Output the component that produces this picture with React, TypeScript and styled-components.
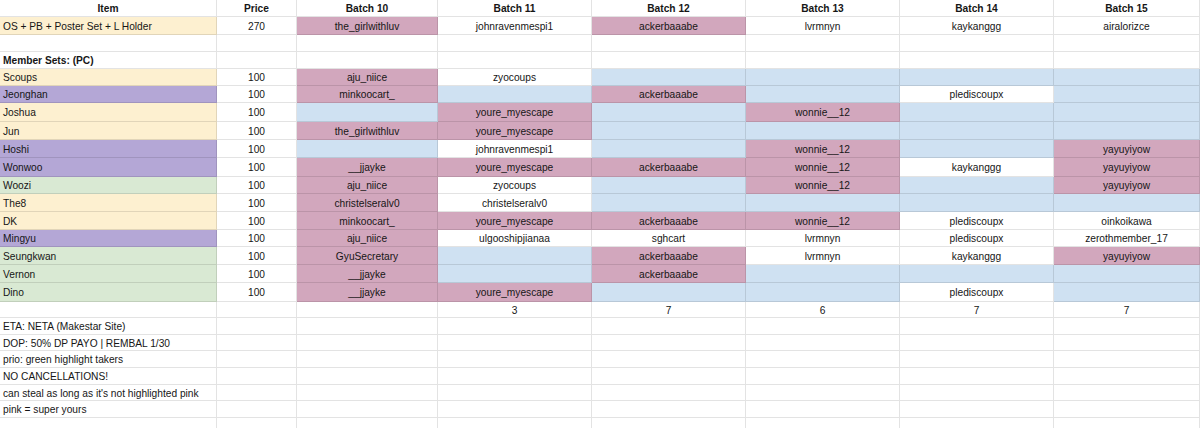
import React from "react";
import styled, { createGlobalStyle } from "styled-components";

const GlobalStyle = createGlobalStyle`
  html, body {
    margin: 0;
    padding: 0;
    background: #ffffff;
    overflow: hidden;
  }
  body {
    font-family: "Liberation Sans", Arial, sans-serif;
  }
`;

type Tone = "w" | "p" | "b" | "y" | "v" | "g";

const tones: Record<Tone, string> = {
  w: "#ffffff",
  p: "#d2a7bd",
  b: "#cfe1f2",
  y: "#fdf0d0",
  v: "#b4a7d6",
  g: "#d9e9d3",
};

const Sheet = styled.div`
  display: grid;
  grid-template-columns: 217px 80px 141px 154px 154px 154px 154px 146px;
  grid-template-rows:
    17px 18px 17px 17px 17px 17px 19px 18px 18px 19px 17px 18px 18px
    17px 18px 18px 19px 16px 17px 16px 17px 17px 16px 17px 17px;
  width: 1200px;
  color: #161616;
  font-size: 10.2px;
`;

const Cell = styled.div<{ $bg: Tone; $align?: "left" | "center"; $bold?: boolean }>`
  box-sizing: border-box;
  display: flex;
  align-items: center;
  justify-content: ${(p) => (p.$align === "left" ? "flex-start" : "center")};
  padding: 3px 3px 0 3px;
  background: ${(p) => tones[p.$bg]};
  border-right: 1px solid rgba(0, 0, 0, 0.11);
  border-bottom: 1px solid rgba(0, 0, 0, 0.11);
  font-weight: ${(p) => (p.$bold ? 700 : 400)};
  white-space: nowrap;
  overflow: hidden;
  line-height: 1;
`;

type C = [string, Tone];

type Row = {
  item: string;
  tone: Tone;
  price: string;
  cells: C[];
  bold?: boolean;
};

const E: C = ["", "w"];
const B: C = ["", "b"];

const rows: Row[] = [
  {
    item: "OS + PB + Poster Set + L Holder",
    tone: "y",
    price: "270",
    cells: [
      ["the_girlwithluv", "p"],
      ["johnravenmespi1", "w"],
      ["ackerbaaabe", "p"],
      ["lvrmnyn", "w"],
      ["kaykanggg", "w"],
      ["airalorizce", "w"],
    ],
  },
  { item: "", tone: "w", price: "", cells: [E, E, E, E, E, E] },
  { item: "Member Sets: (PC)", tone: "w", price: "", bold: true, cells: [E, E, E, E, E, E] },
  {
    item: "Scoups",
    tone: "y",
    price: "100",
    cells: [["aju_niice", "p"], ["zyocoups", "w"], B, B, B, B],
  },
  {
    item: "Jeonghan",
    tone: "v",
    price: "100",
    cells: [["minkoocart_", "p"], B, ["ackerbaaabe", "p"], B, ["plediscoupx", "w"], B],
  },
  {
    item: "Joshua",
    tone: "y",
    price: "100",
    cells: [B, ["youre_myescape", "p"], B, ["wonnie__12", "p"], B, B],
  },
  {
    item: "Jun",
    tone: "y",
    price: "100",
    cells: [["the_girlwithluv", "p"], ["youre_myescape", "p"], B, B, B, B],
  },
  {
    item: "Hoshi",
    tone: "v",
    price: "100",
    cells: [B, ["johnravenmespi1", "w"], B, ["wonnie__12", "p"], B, ["yayuyiyow", "p"]],
  },
  {
    item: "Wonwoo",
    tone: "v",
    price: "100",
    cells: [
      ["__jjayke", "p"],
      ["youre_myescape", "p"],
      ["ackerbaaabe", "p"],
      ["wonnie__12", "p"],
      ["kaykanggg", "w"],
      ["yayuyiyow", "p"],
    ],
  },
  {
    item: "Woozi",
    tone: "g",
    price: "100",
    cells: [["aju_niice", "p"], ["zyocoups", "w"], B, ["wonnie__12", "p"], B, ["yayuyiyow", "p"]],
  },
  {
    item: "The8",
    tone: "y",
    price: "100",
    cells: [["christelseralv0", "p"], ["christelseralv0", "w"], B, B, B, B],
  },
  {
    item: "DK",
    tone: "y",
    price: "100",
    cells: [
      ["minkoocart_", "p"],
      ["youre_myescape", "p"],
      ["ackerbaaabe", "p"],
      ["wonnie__12", "p"],
      ["plediscoupx", "w"],
      ["oinkoikawa", "w"],
    ],
  },
  {
    item: "Mingyu",
    tone: "v",
    price: "100",
    cells: [
      ["aju_niice", "p"],
      ["ulgooshipjianaa", "w"],
      ["sghcart", "w"],
      ["lvrmnyn", "w"],
      ["plediscoupx", "w"],
      ["zerothmember_17", "w"],
    ],
  },
  {
    item: "Seungkwan",
    tone: "g",
    price: "100",
    cells: [
      ["GyuSecretary", "p"],
      B,
      ["ackerbaaabe", "p"],
      ["lvrmnyn", "w"],
      ["kaykanggg", "w"],
      ["yayuyiyow", "p"],
    ],
  },
  {
    item: "Vernon",
    tone: "g",
    price: "100",
    cells: [["__jjayke", "p"], B, ["ackerbaaabe", "p"], B, B, B],
  },
  {
    item: "Dino",
    tone: "g",
    price: "100",
    cells: [["__jjayke", "p"], ["youre_myescape", "p"], B, B, ["plediscoupx", "w"], B],
  },
  {
    item: "",
    tone: "w",
    price: "",
    cells: [E, ["3", "w"], ["7", "w"], ["6", "w"], ["7", "w"], ["7", "w"]],
  },
  { item: "ETA: NETA (Makestar Site)", tone: "w", price: "", cells: [E, E, E, E, E, E] },
  { item: "DOP: 50% DP PAYO | REMBAL 1/30", tone: "w", price: "", cells: [E, E, E, E, E, E] },
  { item: "prio: green highlight takers", tone: "w", price: "", cells: [E, E, E, E, E, E] },
  { item: "NO CANCELLATIONS!", tone: "w", price: "", cells: [E, E, E, E, E, E] },
  {
    item: "can steal as long as it's not highlighted pink",
    tone: "w",
    price: "",
    cells: [E, E, E, E, E, E],
  },
  { item: "pink = super yours", tone: "w", price: "", cells: [E, E, E, E, E, E] },
  { item: "", tone: "w", price: "", cells: [E, E, E, E, E, E] },
];

const headers = ["Item", "Price", "Batch 10", "Batch 11", "Batch 12", "Batch 13", "Batch 14", "Batch 15"];

export default function App() {
  return (
    <>
      <GlobalStyle />
      <Sheet>
        {headers.map((h) => (
          <Cell key={h} $bg="w" $bold>
            {h}
          </Cell>
        ))}
        {rows.map((r, i) => (
          <React.Fragment key={i}>
            <Cell $bg={r.tone} $align="left" $bold={r.bold}>
              {r.item}
            </Cell>
            <Cell $bg="w">{r.price}</Cell>
            {r.cells.map(([text, tone], j) => (
              <Cell key={j} $bg={tone}>
                {text}
              </Cell>
            ))}
          </React.Fragment>
        ))}
      </Sheet>
    </>
  );
}
